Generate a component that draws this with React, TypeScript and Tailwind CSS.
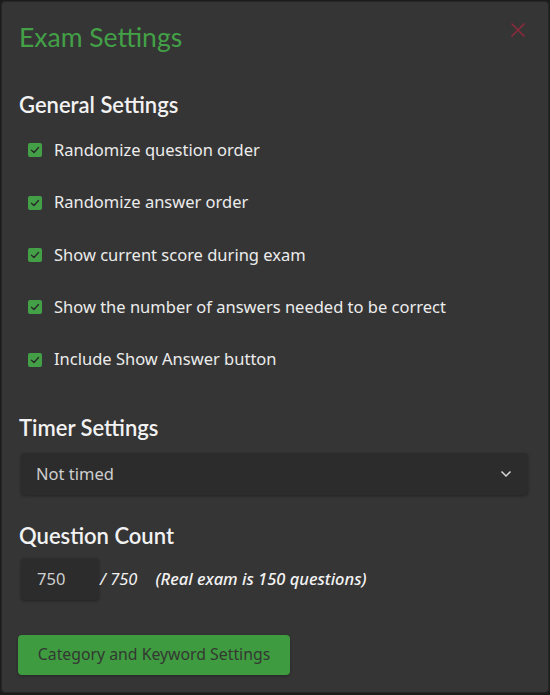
import React from "react";

const body = { fontFamily: '"Noto Sans", "Open Sans", sans-serif' };
const head = { fontFamily: 'Lato, "Noto Sans", sans-serif' };

function Check({ label }: { label: string }) {
  return (
    <div className="flex items-center h-[52.4px]">
      <div className="ml-[9px] w-[14px] h-[14px] rounded-[2px] bg-[#43a047] flex items-center justify-center">
        <svg width="10" height="10" viewBox="0 0 10 10" fill="none">
          <path d="M1.5 5.2 L4 7.5 L8.5 2.5" stroke="#2a2a2a" strokeWidth="1.4" strokeLinecap="round" strokeLinejoin="round" />
        </svg>
      </div>
      <span className="ml-[12px] text-[16.5px] text-[#ececec]" style={body}>{label}</span>
    </div>
  );
}

export default function App() {
  return (
    <div className="w-[550px] h-[695px] bg-[#1c1c1c] p-[1px]">
      <div className="w-[548px] h-[692px] bg-[#353535] border border-[#262626] rounded-[4px] px-[17px] relative">
        <div className="flex items-start justify-between pt-[18px]">
          <h1 className="text-[26.5px] text-[#43a047] leading-[34px]" style={head}>Exam Settings</h1>
          <button className="mt-[2px] mr-[5px]">
            <svg width="16" height="16" viewBox="0 0 16 16" fill="none">
              <path d="M1.5 1.5 L14.5 14.5 M14.5 1.5 L1.5 14.5" stroke="#8b2a3a" strokeWidth="1.6" />
            </svg>
          </button>
        </div>
        <h2 className="mt-[37px] text-[22px] font-semibold text-[#f2f2f2] leading-[28px]" style={head}>General Settings</h2>
        <div className="mt-[5px] flex flex-col">
          <Check label="Randomize question order" />
          <Check label="Randomize answer order" />
          <Check label="Show current score during exam" />
          <Check label="Show the number of answers needed to be correct" />
          <Check label="Include Show Answer button" />
        </div>
        <h2 className="mt-[28px] text-[22px] font-semibold text-[#f2f2f2] leading-[28px]" style={head}>Timer Settings</h2>
        <div className="mt-[11px] ml-[2px] w-[507px] h-[42px] rounded-[4px] bg-[#2c2c2c] shadow-[0_1px_3px_rgba(0,0,0,0.35)] flex items-center justify-between pl-[15px] pr-[16px]">
          <span className="text-[16.5px] text-[#cfcfcf]" style={body}>Not timed</span>
          <svg width="12" height="8" viewBox="0 0 12 8" fill="none">
            <path d="M1.5 1.5 L6 6 L10.5 1.5" stroke="#d8d8d8" strokeWidth="1.5" />
          </svg>
        </div>
        <h2 className="mt-[27px] text-[22px] font-semibold text-[#f2f2f2] leading-[28px]" style={head}>Question Count</h2>
        <div className="mt-[8px] flex items-center">
          <div className="ml-[2px] w-[78px] h-[42px] rounded-[4px] bg-[#2c2c2c] shadow-[0_1px_3px_rgba(0,0,0,0.35)] flex items-center pl-[16px]">
            <span className="text-[16.5px] text-[#cfcfcf]" style={body}>750</span>
          </div>
          <span className="ml-[1px] text-[16.5px] italic text-[#f2f2f2]" style={body}>/ 750</span>
          <span className="ml-[18px] text-[16.5px] italic font-medium text-[#f2f2f2]" style={body}>(Real exam is 150 questions)</span>
        </div>
        <button className="mt-[35px] -ml-[1px] h-[40px] w-[272px] rounded-[4px] bg-[#3f9b3f] shadow-[0_1px_3px_rgba(0,0,0,0.3)] text-[15.8px] text-[#333833] flex items-center justify-center" style={body}>
          Category and Keyword Settings
        </button>
      </div>
    </div>
  );
}
